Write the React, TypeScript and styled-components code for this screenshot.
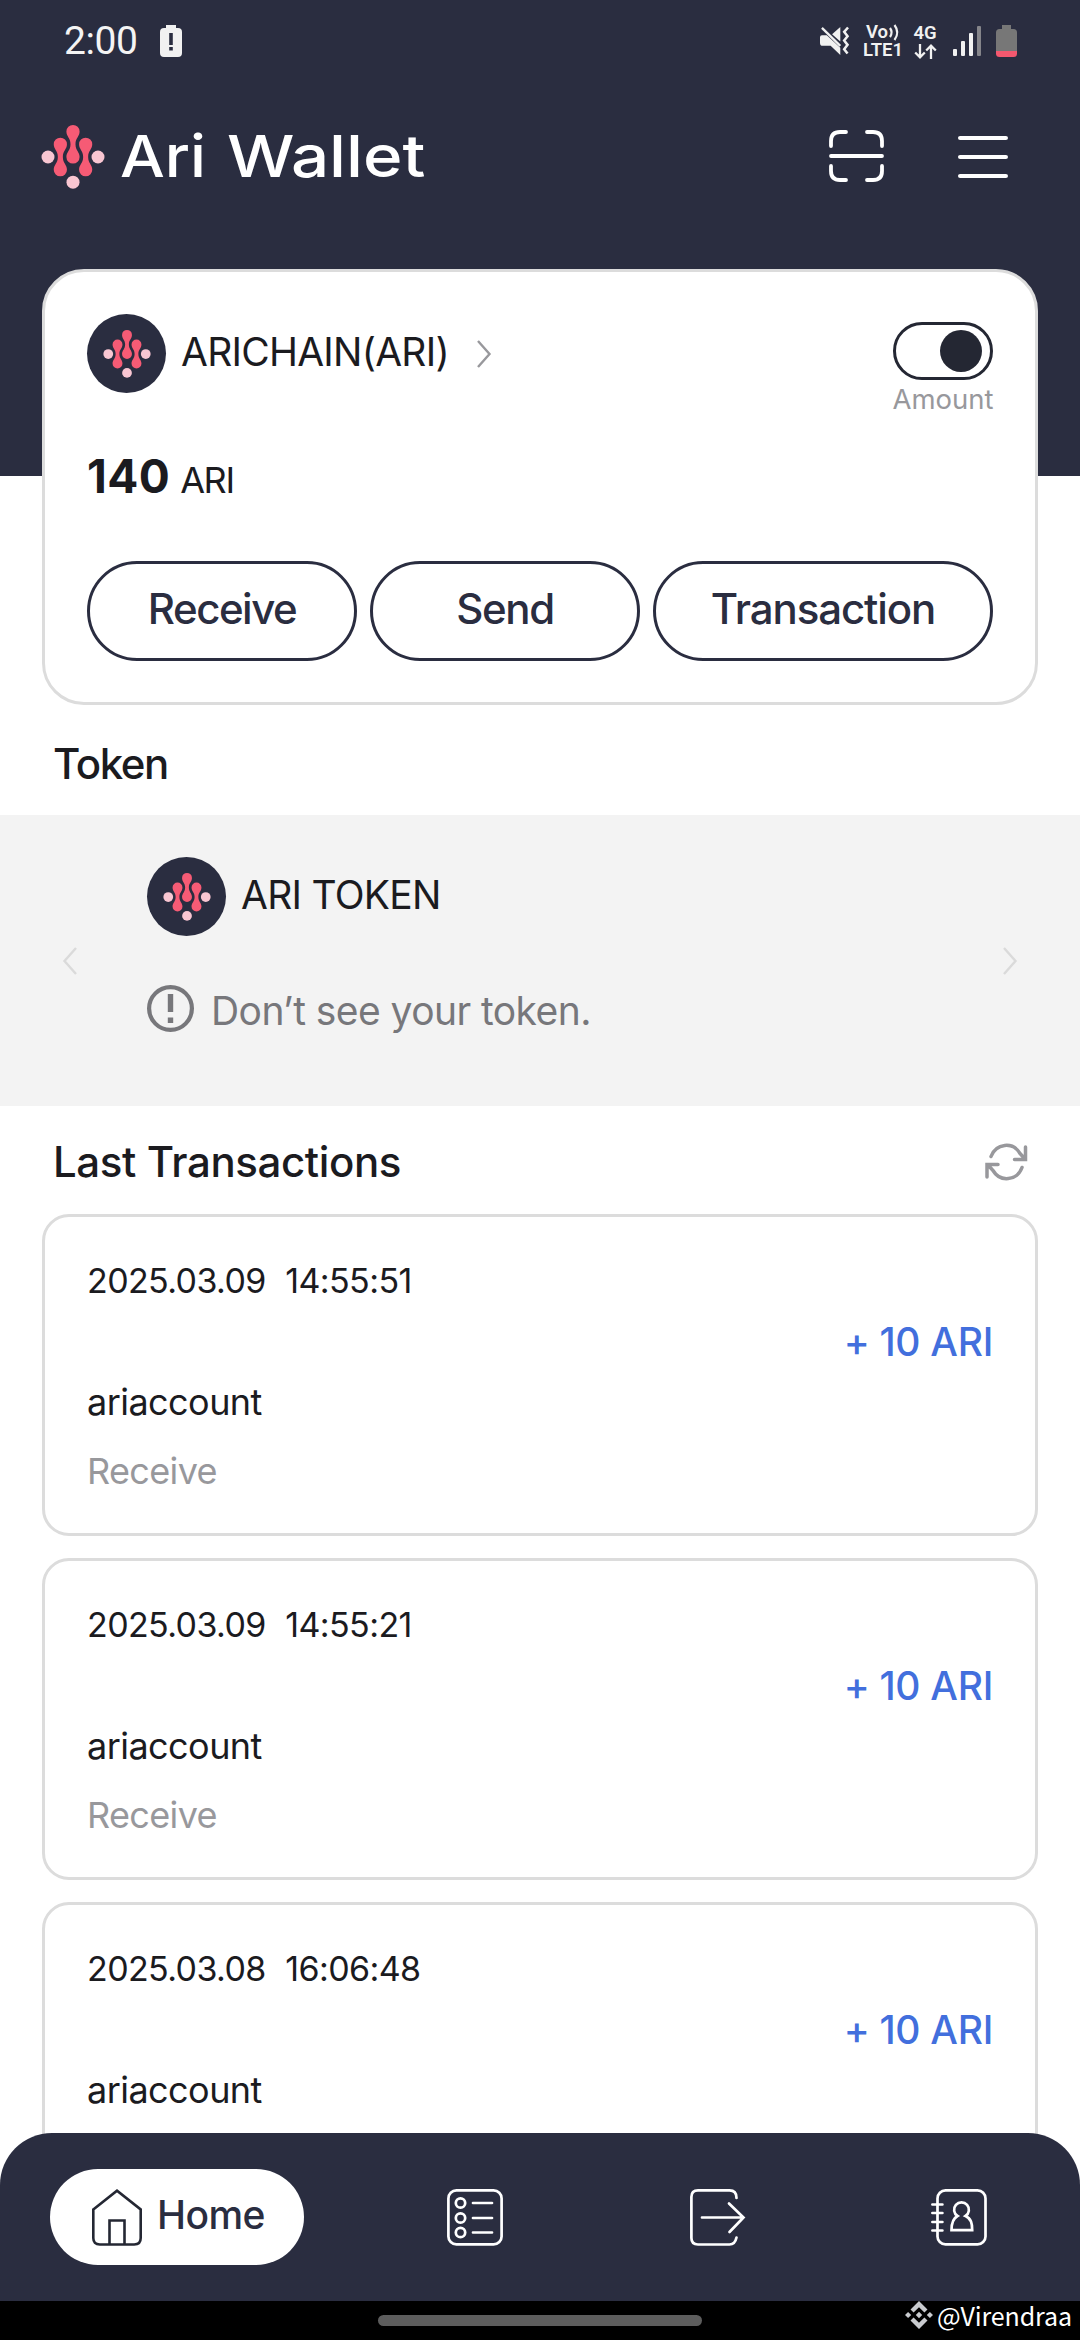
import React from "react";
import styled, { createGlobalStyle } from "styled-components";

const navy = "#2a2d40";
const ink = "#1b1b1f";
const line = "#dcdcdc";
const muted = "#98989c";

const GlobalStyle = createGlobalStyle`
  *, *::before, *::after { box-sizing: border-box; }
  body {
    margin: 0;
    background: #fff;
    font-family: Inter, "Liberation Sans", sans-serif;
    color: ${ink};
  }
  svg { display: block; flex: none; overflow: visible; }
`;

const Screen = styled.div`
  position: relative;
  width: 1080px;
  height: 2340px;
  overflow: hidden;
  background: #fff;
  display: flex;
  flex-direction: column;
`;

const Header = styled.header`
  height: 476px;
  flex: none;
  background: ${navy};
`;

const StatusBar = styled.div`
  height: 82px;
  padding: 0 63px 0 64px;
  display: flex;
  align-items: center;
  justify-content: space-between;
`;

const StatusGroup = styled.div<{ $gap: number }>`
  display: flex;
  align-items: center;
  gap: ${(p) => p.$gap}px;
`;

const Clock = styled.span`
  font: 400 39px/44px Roboto, sans-serif;
  color: #f4f4f4;
  letter-spacing: -0.4px;
`;

const TitleBar = styled.div`
  height: 149px;
  padding: 0 72px 0 41px;
  display: flex;
  align-items: center;
`;

const BrandName = styled.h1`
  margin: 0 0 0 15px;
  flex: 1;
  display: flex;
  font-size: 58px;
  line-height: 62px;
  font-weight: 500;
  color: #fff;
  padding-bottom: 2px;
`;

const BrandWord = styled.span<{ $width: number; $stretch: number }>`
  width: ${(p) => p.$width}px;
  white-space: pre;
  transform: scaleX(${(p) => p.$stretch});
  transform-origin: left center;
`;

const TitleActions = styled.div`
  display: flex;
  align-items: center;
  gap: 74px;
`;

const WalletCard = styled.section`
  flex: none;
  height: 436px;
  margin: -207px 42px 0;
  padding: 42px;
  border: 3px solid ${line};
  border-radius: 42px;
  background: #fff;
  display: flex;
  flex-direction: column;
`;

const AccountRow = styled.div`
  height: 79px;
  display: flex;
  align-items: flex-start;
  justify-content: space-between;
`;

const CoinRow = styled.div`
  display: flex;
  align-items: center;
`;

const CoinDisc = styled.div`
  width: 79px;
  height: 79px;
  border-radius: 50%;
  background: ${navy};
  display: flex;
  align-items: center;
  justify-content: center;
`;

const CoinName = styled.span`
  margin: 0 28px 4px 15px;
  font-size: 39px;
  line-height: 48px;
  letter-spacing: -0.75px;
`;

const ToggleBlock = styled.div`
  width: 100px;
  padding-top: 8px;
  display: flex;
  flex-direction: column;
  align-items: center;
`;

const Toggle = styled.div`
  width: 100px;
  height: 58px;
  padding-right: 8px;
  border: 3px solid #242733;
  border-radius: 29px;
  display: flex;
  align-items: center;
  justify-content: flex-end;
`;

const Knob = styled.div`
  width: 42px;
  height: 42px;
  border-radius: 50%;
  background: #242733;
`;

const ToggleLabel = styled.span`
  margin-top: 4px;
  font-size: 27.5px;
  line-height: 30px;
  color: ${muted};
`;

const Balance = styled.div`
  height: 60px;
  margin-top: 53px;
  display: flex;
  align-items: baseline;
  gap: 10px;
  line-height: 60px;
`;

const BalanceValue = styled.span`
  font-size: 46px;
  font-weight: 700;
  letter-spacing: 0.4px;
`;

const BalanceUnit = styled.span`
  font-size: 36px;
  letter-spacing: -1.4px;
`;

const ButtonRow = styled.div`
  margin-top: 55px;
  display: grid;
  grid-template-columns: 270px 270px 1fr;
  gap: 13px;
`;

const OutlineButton = styled.button<{ $spacing: number }>`
  height: 100px;
  padding: 0 0 4px;
  border: 3px solid ${navy};
  border-radius: 50px;
  background: transparent;
  font: 500 42px/50px Inter, sans-serif;
  letter-spacing: ${(p) => p.$spacing}px;
  color: ${navy};
`;

const SectionHead = styled.div<{ $height: number; $top: number }>`
  flex: none;
  height: ${(p) => p.$height}px;
  padding: ${(p) => p.$top}px 52px 0 53px;
  display: flex;
  align-items: center;
  justify-content: space-between;
`;

const SectionTitle = styled.h2<{ $spacing: number }>`
  margin: 0;
  font-size: 42px;
  line-height: 50px;
  font-weight: 500;
  letter-spacing: ${(p) => p.$spacing}px;
`;

const TokenBand = styled.section`
  flex: none;
  height: 291px;
  padding: 0 63px;
  background: #f3f3f3;
  display: flex;
  align-items: center;
`;

const TokenBody = styled.div`
  flex: 1;
  align-self: stretch;
  padding: 42px 0 0 70px;
`;

const TokenNotice = styled.div`
  margin-top: 45px;
  display: flex;
  align-items: center;
  gap: 17px;
  font-size: 39px;
  line-height: 54px;
  letter-spacing: -0.57px;
  color: #77777b;
`;

const NoticeText = styled.span`
  margin: 3px 0 -3px;
`;

const TxList = styled.div`
  margin: 0 42px;
  display: flex;
  flex-direction: column;
  gap: 22px;
`;

const TxCard = styled.article`
  flex: none;
  height: 322px;
  padding: 43px 42px;
  border: 3px solid ${line};
  border-radius: 27px;
  display: flex;
  justify-content: space-between;
`;

const TxInfo = styled.div`
  display: flex;
  flex-direction: column;
  line-height: 42px;
`;

const TxDate = styled.div`
  display: flex;
  gap: 19.5px;
  font-size: 34px;
  letter-spacing: -0.6px;
`;

const TxAccount = styled.div`
  margin-top: 79px;
  font-size: 36px;
  letter-spacing: -0.55px;
`;

const TxType = styled.div`
  margin-top: 27px;
  font-size: 36px;
  letter-spacing: -0.65px;
  color: ${muted};
`;

const TxAmount = styled.div`
  margin-top: 61px;
  font-size: 39px;
  line-height: 42px;
  font-weight: 500;
  letter-spacing: -0.3px;
  color: #426fdd;
`;

const Dock = styled.footer`
  position: absolute;
  left: 0;
  right: 0;
  bottom: 0;
`;

const NavBar = styled.nav`
  height: 168px;
  padding-left: 50px;
  border-radius: 52px 52px 0 0;
  background: ${navy};
  display: flex;
  align-items: center;
`;

const HomeTab = styled.div`
  width: 254px;
  height: 96px;
  margin-right: 50px;
  padding-left: 42px;
  border-radius: 48px;
  background: #fff;
  display: flex;
  align-items: center;
  gap: 15px;
  font-size: 39px;
  line-height: 46px;
  font-weight: 500;
  letter-spacing: -0.6px;
  color: ${navy};
`;

const HomeLabel = styled.span`
  padding-bottom: 5px;
`;

const Tab = styled.div`
  width: 242px;
  display: flex;
  justify-content: center;
`;

const GestureBar = styled.div`
  height: 39px;
  padding-top: 14px;
  background: #000;
`;

const Handle = styled.div`
  width: 324px;
  height: 11px;
  margin: 0 auto;
  border-radius: 6px;
  background: #5d5d5d;
`;

const Credit = styled.div`
  position: absolute;
  right: 8px;
  bottom: 7px;
  display: flex;
  align-items: center;
  gap: 4px;
  font: 400 25px/36px "Noto Sans CJK SC", "Noto Sans", sans-serif;
  letter-spacing: -0.1px;
  color: #fff;
`;

const dumbbell =
  "M-6.600 0a6.600 6.600 0 0 1 13.200 0C6.600 5 2.500 6.500 2.500 12.750S6.600 20.500 6.600 25.500a6.600 6.600 0 0 1-13.200 0C-6.600 20.500-2.500 19-2.500 12.750S-6.600 5-6.600 0z";

const LogoMark = ({ width }: { width: number }) => (
  <svg width={width} height={width} viewBox="-32 -32 64 64">
    <g fill="#f65b75">
      <path d={dumbbell} transform="translate(0 -25.500)" />
      <path d={dumbbell} transform="translate(-12.650 -12.750)" />
      <path d={dumbbell} transform="translate(12.650 -12.750)" />
    </g>
    <g fill="#f9c6d2">
      <circle cx="-25" cy="0" r="6.500" />
      <circle cx="25" cy="0" r="6.500" />
      <circle cx="0" cy="25.200" r="6.500" />
    </g>
  </svg>
);

const Coin = () => (
  <CoinDisc>
    <LogoMark width={48} />
  </CoinDisc>
);

const BatteryAlert = () => (
  <svg width="22" height="32" viewBox="0 0 22 32">
    <path
      fill="#f1f1f1"
      fillRule="evenodd"
      d="M6 0h10v3h2a4 4 0 0 1 4 4v21a4 4 0 0 1-4 4H4a4 4 0 0 1-4-4V7a4 4 0 0 1 4-4h2zM9.200 8v12h3.600V8zM9.200 22v3.600h3.600V22z"
    />
  </svg>
);

const MuteIcon = () => (
  <svg width="29" height="30" viewBox="0 0 30 30" fill="#f1f1f1">
    <path d="M0 11q0-2 2-2h5l14 13v7.500L11 20H3q-3 0-3-3z" />
    <path d="M21 .5v15L12.500 8z" />
    <path d="M2 1.500 21 20" stroke="#f1f1f1" strokeWidth="2.400" />
    <path
      d="M29 1l-4 4.500 3.500 4.500-3.500 4.500 3.500 4.500-3.500 4.500 3.500 4.500"
      fill="none"
      stroke="#f1f1f1"
      strokeWidth="2.600"
    />
  </svg>
);

const StatusIcons = styled(StatusGroup)`
  & > :nth-child(2) { margin-left: 14px; }
  & > :nth-child(3) { margin-left: 10px; }
  & > :nth-child(4) { margin-left: 16px; }
  & > :nth-child(5) { margin-left: 15px; }
`;

const VolteBadge = styled.div`
  width: 40px;
  display: flex;
  flex-direction: column;
  align-items: center;
  font: 600 18.5px/18px Roboto, sans-serif;
  color: #f1f1f1;
`;

const VoRow = styled.div`
  display: flex;
  align-items: center;
  gap: 1px;
`;

const NetBadge = styled(VolteBadge)`
  width: 24px;
  gap: 2px;
`;

const VolteIcon = () => (
  <VolteBadge>
    <VoRow>
      Vo
      <svg width="11" height="17" viewBox="0 0 11 17" fill="none" stroke="#f1f1f1" strokeWidth="2.200">
        <path d="M1 4q3.200 4.500 0 9M5.500 1q5.500 7.500 0 15" />
      </svg>
    </VoRow>
    <span>LTE1</span>
  </VolteBadge>
);

const NetIcon = () => (
  <NetBadge>
    <span>4G</span>
    <svg width="23" height="15" viewBox="0 0 23 15" fill="none" stroke="#f1f1f1" strokeWidth="2.300">
      <path d="M6 0v13M1.200 8.500 6 13.300l4.800-4.800M17 15V2M12.200 6.500 17 1.700l4.800 4.800" />
    </svg>
  </NetBadge>
);

const SignalIcon = () => (
  <svg width="28" height="30" viewBox="0 0 28 30" fill="#f1f1f1">
    <rect x="0" y="23" width="4" height="7" rx="1" />
    <rect x="8" y="15" width="4" height="15" rx="1" />
    <rect x="16" y="7" width="4" height="23" rx="1" />
    <rect x="24" y="0" width="4" height="30" rx="1" fill="#85858a" />
  </svg>
);

const LowBattery = () => (
  <svg width="21" height="32" viewBox="0 0 21 32">
    <path fill="#777" d="M6 0h9v4h2.500Q21 4 21 7.500V26H0V7.500Q0 4 3.500 4H6z" />
    <path fill="#f4586f" d="M0 26h21v2.500q0 3.500-3.500 3.500h-14Q0 32 0 28.500z" />
  </svg>
);

const ScanIcon = () => (
  <svg width="55" height="53" viewBox="0 0 55 53" fill="none" stroke="#fff" strokeWidth="3.800" strokeLinecap="round">
    <path d="M2 16V11q0-9 9-9h6M38 2h6q9 0 9 9v5M2 36v5q0 9 9 9h6M38 50h6q9 0 9-9v-5M2 26h51" />
  </svg>
);

const MenuIcon = () => (
  <svg width="50" height="44" viewBox="0 0 50 44" stroke="#fff" strokeWidth="4.200" strokeLinecap="round">
    <path d="M2.100 3h45.800M2.100 22h45.800M2.100 41h45.800" />
  </svg>
);

const Chevron = ({ color, left }: { color: string; left?: boolean }) => (
  <svg width="14" height="28" viewBox="0 0 14 28" fill="none" stroke={color} strokeWidth="2.400">
    <path d={left ? "M13 1 1.500 14 13 27" : "M1 1 12.500 14 1 27"} />
  </svg>
);

const AlertIcon = () => (
  <svg width="47" height="47" viewBox="0 0 47 47">
    <circle cx="23.500" cy="23.500" r="21.400" fill="none" stroke="#77777b" strokeWidth="4.200" />
    <path d="M20.800 9h5.400v18h-5.400zM20.800 32.500h5.400v5.500h-5.400z" fill="#77777b" />
  </svg>
);

const RefreshIcon = () => (
  <svg width="43" height="36" viewBox="0 0 43 36" fill="none" stroke="#98989c" strokeWidth="3.500" strokeLinecap="round">
    <path d="M6 12.500C11-1 28-2.500 35 9.500L40 15M40.500 3v12.500H29.500" />
    <path d="M37 23.500C32 37 15 38.500 8 26.500L3 21M2 33V20.500h11" />
  </svg>
);

const HomeIcon = () => (
  <svg width="50" height="57" viewBox="0 0 50 57" fill="none" stroke="#242733" strokeWidth="2.600">
    <path d="M1.300 20.500 25 1.700l23.700 18.800V49q0 6.500-6.500 6.500H7.800q-6.500 0-6.500-6.500zM17.500 55.500v-24h15v24" />
  </svg>
);

const ListIcon = () => (
  <svg width="56" height="57" viewBox="0 0 56 57" fill="none" stroke="#fff" strokeWidth="2.700" strokeLinecap="round">
    <rect x="1.400" y="1.400" width="53.200" height="54" rx="8" />
    <circle cx="13.500" cy="14" r="4.700" />
    <circle cx="13.500" cy="29" r="4.700" />
    <circle cx="13.500" cy="43.500" r="4.700" />
    <path d="M26 14h19M26 29h19M26 43.500h19" />
  </svg>
);

const ExportIcon = () => (
  <svg width="55" height="57" viewBox="0 0 55 57" fill="none" stroke="#fff" strokeWidth="2.700" strokeLinecap="round">
    <path d="M46.500 9q0-7.600-7-7.600H8Q1.400 1.400 1.400 8v41q0 6.500 6.600 6.500h31.500q5.500 0 7-7M12 28.500h41.500M39 14.500l14.500 14L39.500 43" />
  </svg>
);

const ContactsIcon = () => (
  <svg width="56" height="57" viewBox="0 0 56 57" fill="none" stroke="#fff" strokeWidth="2.700" strokeLinecap="round">
    <rect x="6.500" y="1.400" width="48" height="54" rx="8" />
    <path d="M1.400 15.500h10M1.400 24h10M1.400 33h10M1.400 41.500h10" />
    <path d="M20.500 41.200h20.700c0-7-1-11.500-6.700-14.200a7.400 7.400 0 1 0-8 0c-5 2.700-6 7.200-6 14.200z" />
  </svg>
);

const DiamondIcon = () => (
  <svg width="28" height="28" viewBox="0 0 28 28" fill="#c9cbcf">
    <path d="M14 0l8.500 8.500-3.100 3.100L14 6.200l-5.400 5.400-3.100-3.100zM14 28l8.500-8.500-3.100-3.100-5.400 5.400-5.400-5.400-3.100 3.100zM14 10.800l3.200 3.200-3.200 3.200-3.200-3.200zM3.100 10.900 6.200 14l-3.100 3.100L0 14zM24.900 10.900 28 14l-3.100 3.100-3.100-3.100z" />
  </svg>
);

const transactions = [
  { date: "2025.03.09", time: "14:55:51", account: "ariaccount", type: "Receive", amount: "+ 10 ARI" },
  { date: "2025.03.09", time: "14:55:21", account: "ariaccount", type: "Receive", amount: "+ 10 ARI" },
  { date: "2025.03.08", time: "16:06:48", account: "ariaccount", type: "", amount: "+ 10 ARI" },
];

export default function App() {
  return (
    <Screen>
      <GlobalStyle />
      <Header>
        <StatusBar>
          <StatusGroup $gap={22}>
            <Clock>2:00</Clock>
            <BatteryAlert />
          </StatusGroup>
          <StatusIcons $gap={0}>
            <MuteIcon />
            <VolteIcon />
            <NetIcon />
            <SignalIcon />
            <LowBattery />
          </StatusIcons>
        </StatusBar>
        <TitleBar>
          <LogoMark width={64} />
          <BrandName>
            <BrandWord $width={107} $stretch={1.09}>{"Ari "}</BrandWord>
            <BrandWord $width={200} $stretch={1.16}>Wallet</BrandWord>
          </BrandName>
          <TitleActions>
            <ScanIcon />
            <MenuIcon />
          </TitleActions>
        </TitleBar>
      </Header>

      <WalletCard>
        <AccountRow>
          <CoinRow>
            <Coin />
            <CoinName>ARICHAIN(ARI)</CoinName>
            <Chevron color="#98989c" />
          </CoinRow>
          <ToggleBlock>
            <Toggle>
              <Knob />
            </Toggle>
            <ToggleLabel>Amount</ToggleLabel>
          </ToggleBlock>
        </AccountRow>
        <Balance>
          <BalanceValue>140</BalanceValue>
          <BalanceUnit>ARI</BalanceUnit>
        </Balance>
        <ButtonRow>
          <OutlineButton $spacing={-1.5}>Receive</OutlineButton>
          <OutlineButton $spacing={-1.4}>Send</OutlineButton>
          <OutlineButton $spacing={-1.1}>Transaction</OutlineButton>
        </ButtonRow>
      </WalletCard>

      <SectionHead $height={110} $top={7}>
        <SectionTitle $spacing={-1.4}>Token</SectionTitle>
      </SectionHead>
      <TokenBand>
        <Chevron color="#dadada" left />
        <TokenBody>
          <CoinRow>
            <Coin />
            <CoinName>ARI TOKEN</CoinName>
          </CoinRow>
          <TokenNotice>
            <AlertIcon />
            <NoticeText>Don’t see your token.</NoticeText>
          </TokenNotice>
        </TokenBody>
        <Chevron color="#dadada" />
      </TokenBand>

      <SectionHead $height={108} $top={4}>
        <SectionTitle $spacing={-0.4}>Last Transactions</SectionTitle>
        <RefreshIcon />
      </SectionHead>
      <TxList>
        {transactions.map((tx) => (
          <TxCard key={tx.date + tx.time}>
            <TxInfo>
              <TxDate>
                <span>{tx.date}</span>
                <span>{tx.time}</span>
              </TxDate>
              <TxAccount>{tx.account}</TxAccount>
              <TxType>{tx.type}</TxType>
            </TxInfo>
            <TxAmount>{tx.amount}</TxAmount>
          </TxCard>
        ))}
      </TxList>

      <Dock>
        <NavBar>
          <HomeTab>
            <HomeIcon />
            <HomeLabel>Home</HomeLabel>
          </HomeTab>
          <Tab>
            <ListIcon />
          </Tab>
          <Tab>
            <ExportIcon />
          </Tab>
          <Tab>
            <ContactsIcon />
          </Tab>
        </NavBar>
        <GestureBar>
          <Handle />
        </GestureBar>
        <Credit>
          <DiamondIcon />
          <span>@Virendraa</span>
        </Credit>
      </Dock>
    </Screen>
  );
}
